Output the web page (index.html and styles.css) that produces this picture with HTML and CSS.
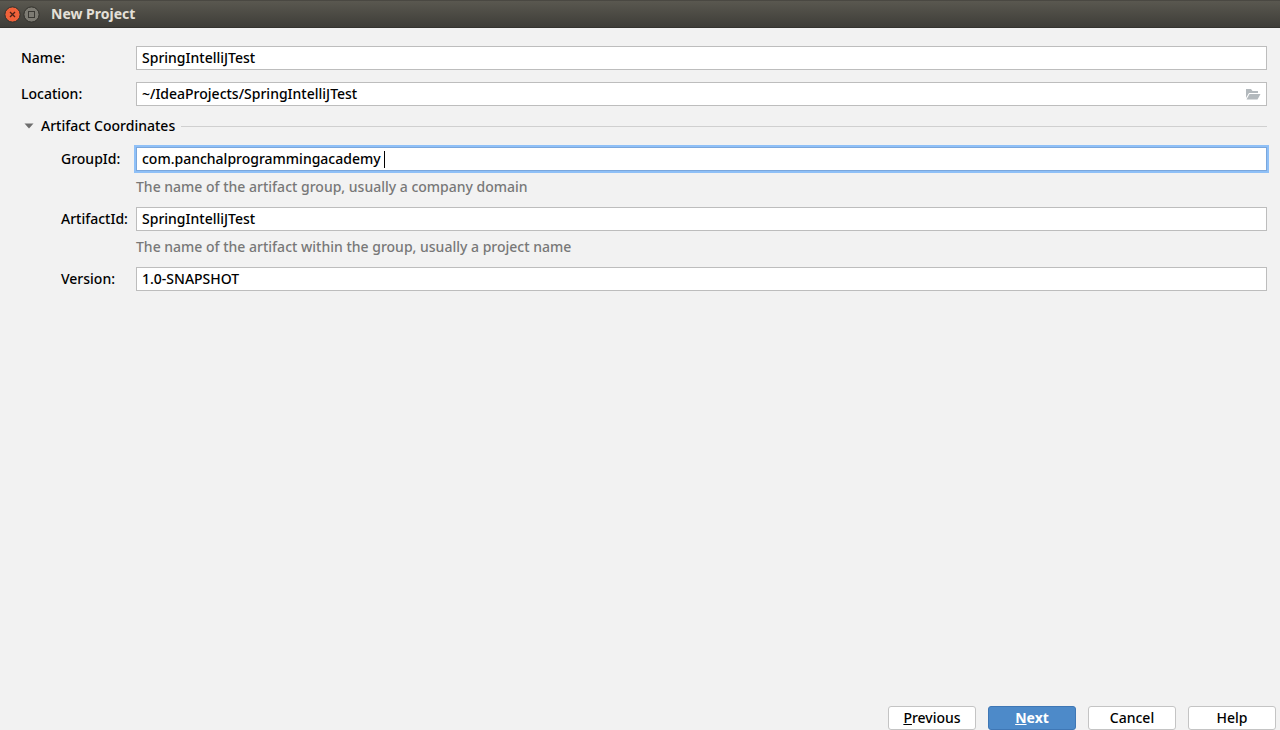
FILE: index.html
```
<!DOCTYPE html>
<html lang="en">
<head>
    <meta charset="UTF-8">
    <meta name="viewport" content="width=device-width, initial-scale=1.0">
    <title>New Project</title>
    <link rel="stylesheet" href="styles.css">
</head>
<body>
    <!-- Title bar -->
    <header class="titlebar">
        <button class="window-button" type="button" aria-label="Close">
            <svg width="17" height="17" viewBox="0 0 17 17">
                <circle cx="8.5" cy="8.5" r="7.6" fill="#f0623a" stroke="#33322d"/>
                <path d="M6 6l5 5M11 6l-5 5" stroke="#4b2116" stroke-width="1.3"/>
            </svg>
        </button>
        <button class="window-button" type="button" aria-label="Maximize">
            <svg width="17" height="17" viewBox="0 0 17 17">
                <circle cx="8.5" cy="8.5" r="7.6" fill="#7d7b73" stroke="#33322d"/>
                <rect x="5.5" y="5.5" width="6" height="6" fill="none" stroke="#3a3934"/>
            </svg>
        </button>
        <h1 class="title">New Project</h1>
    </header>

    <!-- Project settings -->
    <form class="form" id="project">
        <div class="row">
            <label class="label" for="name">Name:</label>
            <input class="input" id="name" type="text" value="SpringIntelliJTest">
        </div>
        <div class="row">
            <label class="label" for="location">Location:</label>
            <div class="field">
                <input class="input" id="location" type="text" value="~/IdeaProjects/SpringIntelliJTest">
                <button class="browse" type="button" aria-label="Browse">
                    <svg width="16" height="14" viewBox="0 0 16 14">
                        <path d="M1 2h5l1.5 2H13v2H4L1 11z" fill="#b3b9bd"/>
                        <path d="M4.5 7H15.5L12.5 12.5H1.5z" fill="#b3b9bd"/>
                    </svg>
                </button>
            </div>
        </div>

        <button class="section" type="button" aria-expanded="true">
            <svg class="arrow" width="10" height="6" viewBox="0 0 10 6">
                <path d="M0.5 0.5h9L5 5.5z" fill="#6e6e6e"/>
            </svg>
            Artifact Coordinates
        </button>

        <div class="row nested">
            <label class="label" for="groupId">GroupId:</label>
            <div class="field">
                <input class="input focused" id="groupId" type="text" value="com.panchalprogrammingacademy">
                <span class="caret"></span>
            </div>
        </div>
        <p class="hint">The name of the artifact group, usually a company domain</p>
        <div class="row nested">
            <label class="label" for="artifactId">ArtifactId:</label>
            <input class="input" id="artifactId" type="text" value="SpringIntelliJTest">
        </div>
        <p class="hint">The name of the artifact within the group, usually a project name</p>
        <div class="row nested">
            <label class="label" for="version">Version:</label>
            <input class="input" id="version" type="text" value="1.0-SNAPSHOT">
        </div>
    </form>

    <!-- Wizard buttons -->
    <footer class="actions">
        <button class="button" type="button"><u>P</u>revious</button>
        <button class="button primary" type="submit" form="project"><u>N</u>ext</button>
        <button class="button" type="button">Cancel</button>
        <button class="button" type="button">Help</button>
    </footer>
</body>
</html>
```

FILE: styles.css
```
* {
    box-sizing: border-box;
}
body {
    margin: 0;
    min-height: 100vh;
    display: flex;
    flex-direction: column;
    background-color: #f2f2f2;
    color: #000000;
    font-family: "Noto Sans", "Open Sans", sans-serif;
    font-size: 14px;
    font-weight: 500;
    line-height: 20px;
}
button,
input {
    font: inherit;
    color: inherit;
}

/* Title bar */
.titlebar {
    display: flex;
    align-items: center;
    gap: 2px;
    height: 28px;
    padding: 0 4px;
    background: linear-gradient(#5a5850, #3e3d38);
    border-top: 1px solid #4a4842;
    border-bottom: 1px solid #34332f;
}
.window-button {
    display: flex;
    padding: 0;
    border: none;
    background: none;
}
.title {
    margin: 0 0 0 9px;
    color: #e4e0d8;
    font-size: 14px;
    font-weight: 700;
}

/* Form */
.form {
    flex-grow: 1;
    padding: 18px 13px 18px 21px;
}
.row {
    display: flex;
    align-items: center;
}
.row + .row {
    margin-top: 12px;
}
.label {
    flex: none;
    width: 115px;
}
.field {
    position: relative;
    display: flex;
    flex: 1;
}
.input {
    flex: 1;
    min-width: 0;
    height: 24px;
    padding: 0 5px 2px;
    border: 1px solid #bdbdbd;
    border-radius: 0;
    background-color: #ffffff;
    outline: none;
}
.focused {
    border-color: #7ba7dc;
    box-shadow: 0 0 0 2px #8fc0f7;
}
.caret {
    position: absolute;
    top: 4px;
    left: 248px;
    width: 1px;
    height: 17px;
    background-color: #000000;
}
.browse {
    position: absolute;
    top: 5px;
    right: 6px;
    display: flex;
    padding: 0;
    border: none;
    background: none;
}
.section {
    display: flex;
    align-items: center;
    width: 100%;
    margin: 10px 0 11px;
    padding: 0 0 0 3px;
    border: none;
    background: none;
}
.section::after {
    content: "";
    flex: 1;
    height: 1px;
    margin-left: 6px;
    background-color: #d0d0d0;
}
.arrow {
    margin-right: 7px;
}
.nested .label {
    width: 75px;
    margin-left: 40px;
    white-space: nowrap;
}
.hint {
    margin: 6px 0 10px 115px;
    color: #787878;
}

/* Wizard buttons */
.actions {
    display: flex;
    justify-content: flex-end;
    gap: 12px;
    padding-right: 4px;
}
.button {
    width: 88px;
    height: 24px;
    padding: 0;
    border: 1px solid #c4c4c4;
    border-radius: 3px;
    background-color: #ffffff;
}
.primary {
    border-color: #3f77b5;
    background-color: #4d8ac9;
    color: #ffffff;
    font-weight: 700;
}
```
